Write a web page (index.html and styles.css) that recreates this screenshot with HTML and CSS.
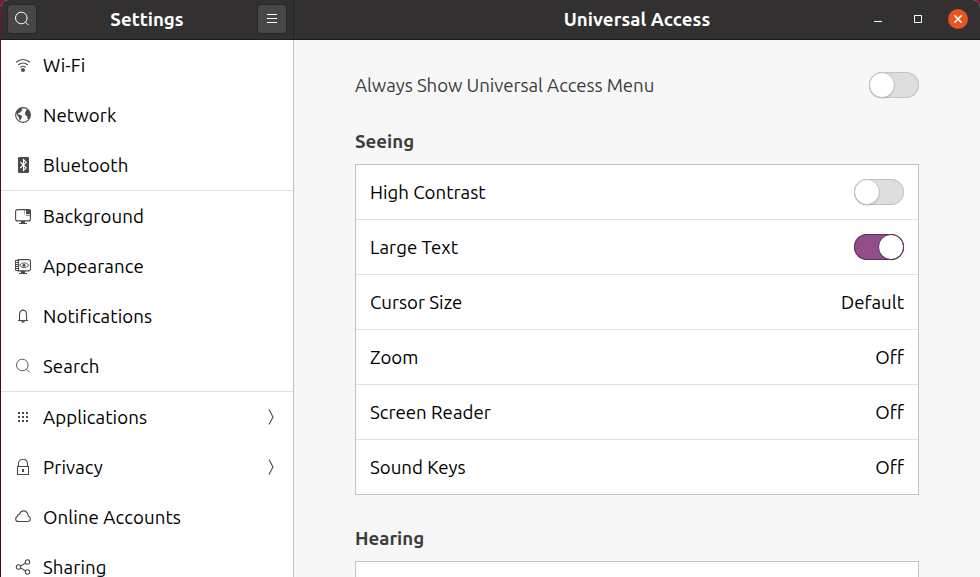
FILE: index.html
```html
<!DOCTYPE html>
<html lang="en">
<head>
    <meta charset="UTF-8">
    <meta name="viewport" content="width=device-width, initial-scale=1.0">
    <title>Settings - Universal Access</title>
    <link rel="stylesheet" href="styles.css">
</head>
<body>
    <div class="window">
        <header class="titlebar">
            <div class="titlebar-left">
                <button class="header-button" aria-label="Search">
                    <svg width="16" height="16" viewBox="0 0 16 16"><circle cx="7.3" cy="7" r="5.8"/><path d="M11.5 11.2l3 3"/></svg>
                </button>
                <h1>Settings</h1>
                <button class="header-button" aria-label="Menu">
                    <svg width="16" height="16" viewBox="0 0 16 16"><path d="M3 3.5h10M3 7.5h10M3 11.5h10"/></svg>
                </button>
            </div>
            <div class="titlebar-right">
                <h1>Universal Access</h1>
                <div class="window-controls">
                    <button class="control" aria-label="Minimize">
                        <svg width="16" height="16" viewBox="0 0 16 16"><path d="M4 10.5h8"/></svg>
                    </button>
                    <button class="control" aria-label="Maximize">
                        <svg width="16" height="16" viewBox="0 0 16 16"><path d="M4.5 4.5h7v7h-7z"/></svg>
                    </button>
                    <button class="control close" aria-label="Close">
                        <svg width="20" height="20" viewBox="0 0 20 20"><path d="M6.3 6.3l7.4 7.4M13.7 6.3l-7.4 7.4"/></svg>
                    </button>
                </div>
            </div>
        </header>

        <div class="content">
            <nav class="sidebar">
                <div class="nav-group">
                    <a class="nav-item">
                        <svg class="icon" viewBox="0 0 16 16"><path d="M1 5.3Q8 -.2 15 5.3M3.2 8Q8 4 12.8 8M5.2 10.4Q8 8.2 10.8 10.4"/><circle class="fill" cx="8" cy="13" r="2"/></svg>
                        <span>Wi-Fi</span>
                    </a>
                    <a class="nav-item">
                        <svg class="icon" viewBox="0 0 16 16"><circle cx="8" cy="8" r="7.4"/><path class="fill" d="M2 3.5L5 1.2 7.6 1 6.6 2.6 7.2 3.6 5.6 4.8 4.3 6 3 6 3.2 7.4 5 7.8 7.2 9.2 6.4 11 5.4 13.6 4.6 13 4 10.5 2.6 8.8 1.4 6.8zM11 3.6L12.3 2.2 14.2 4 15.3 7 15 10 13.4 12.5 12.4 11.5 12.2 9 10.4 8.4 10 6.2z"/></svg>
                        <span>Network</span>
                    </a>
                    <a class="nav-item">
                        <svg class="icon" viewBox="0 0 16 16"><rect class="fill" x="3" y="0" width="11" height="16" rx="1.3"/><path class="light" d="M5.3 5l5.8 5.8-2.6 2.7V2.5l2.6 2.7L5.3 11"/></svg>
                        <span>Bluetooth</span>
                    </a>
                </div>
                <div class="nav-group">
                    <a class="nav-item">
                        <svg class="icon" viewBox="0 -1 16 16"><path d="M10 .6H2.6a2 2 0 0 0-2 2v7.3a2 2 0 0 0 2 2h10.8a2 2 0 0 0 2-2V7"/><path class="fill" d="M9.5 0h4.7A1.8 1.8 0 0 1 16 1.8V8l-2-1.2h-3.2L9.5 5.2zM6 12h4v2h2v1H4v-1h2z"/><path class="light" d="M10.5 1.2V5.8h4.5"/></svg>
                        <span>Background</span>
                    </a>
                    <a class="nav-item">
                        <svg class="icon" viewBox="0 -1 16 16"><path d="M2.5 .6h11a2 2 0 0 1 2 2v7.3a2 2 0 0 1-2 2h-11M3.5 .5v11.5M.5 1v10.5M.5 1.5h3M.5 3.5h3M.5 5.5h3M.5 7.5h3M.5 9.5h3M.5 11.5h3"/><path class="thin" d="M4.5 6.3Q9 1.3 14 6.3 9 10.9 4.5 6.3z"/><circle class="fill" cx="9" cy="6.2" r="1.5"/><path class="fill" d="M6 12h4v2h2v1H4v-1h2z"/></svg>
                        <span>Appearance</span>
                    </a>
                    <a class="nav-item">
                        <svg class="icon" viewBox="0 0 16 16"><path d="M3 12.5h10M4.5 12.2V6.5C4.5 4 6 2.3 8 2.3s3.5 1.7 3.5 4.2v5.7M8 2.3V1"/><path class="fill" d="M6 13.2h4q-.5 1.6-2 1.6t-2-1.6z"/></svg>
                        <span>Notifications</span>
                    </a>
                    <a class="nav-item">
                        <svg class="icon thin" viewBox="0 0 16 16"><circle cx="7.3" cy="7" r="5.8"/><path d="M11.5 11.2l3 3"/></svg>
                        <span>Search</span>
                    </a>
                </div>
                <div class="nav-group">
                    <a class="nav-item">
                        <svg class="icon" viewBox="0 0 16 16"><path class="fill" d="M3 3h2v2H3zM7 3h2v2H7zM11 3h2v2h-2zM3 7h2v2H3zM7 7h2v2H7zM11 7h2v2h-2zM3 11h2v2H3zM7 11h2v2H7zM11 11h2v2h-2z"/></svg>
                        <span>Applications</span>
                        <svg class="arrow" viewBox="0 0 16 16"><path d="M6 .5l4 7.5-4 7.5"/></svg>
                    </a>
                    <a class="nav-item">
                        <svg class="icon" viewBox="0 0 16 16"><path d="M2.5 7.5h11v8h-11zM3.5 7.5V4.5a4.5 4.3 0 0 1 9 0v3"/><path class="fill" d="M7 10h2v3H7z"/></svg>
                        <span>Privacy</span>
                        <svg class="arrow" viewBox="0 0 16 16"><path d="M6 .5l4 7.5-4 7.5"/></svg>
                    </a>
                    <a class="nav-item">
                        <svg class="icon" viewBox="0 0 16 16"><path d="M3.5 12.5h9.2a2.8 2.8 0 0 0 .5-5.5C12.8 4 11 1.9 8.6 1.9 6.6 1.9 5 3.3 4.5 5.3 2.5 5.3 2.4 6.8 2.5 7.2-.2 8.5.1 12.5 3.5 12.5z"/></svg>
                        <span>Online Accounts</span>
                    </a>
                    <a class="nav-item">
                        <svg class="icon" viewBox="0 0 16 16"><circle cx="3.5" cy="8" r="2.2"/><circle cx="12.5" cy="3" r="2.2"/><circle cx="12.5" cy="13" r="2.2"/><path d="M5.6 7l4.8-2.8M5.6 9l4.8 2.8"/></svg>
                        <span>Sharing</span>
                    </a>
                </div>
            </nav>

            <main class="panel">
                <div class="menu-row">
                    <span class="label">Always Show Universal Access Menu</span>
                    <span class="switch"></span>
                </div>

                <h2>Seeing</h2>
                <div class="list">
                    <div class="row"><span class="label">High Contrast</span><span class="switch"></span></div>
                    <div class="row"><span class="label">Large Text</span><span class="switch on"></span></div>
                    <div class="row"><span class="label">Cursor Size</span><span class="label">Default</span></div>
                    <div class="row"><span class="label">Zoom</span><span class="label">Off</span></div>
                    <div class="row"><span class="label">Screen Reader</span><span class="label">Off</span></div>
                    <div class="row"><span class="label">Sound Keys</span><span class="label">Off</span></div>
                </div>

                <h2>Hearing</h2>
                <div class="list">
                    <div class="row"></div>
                </div>
            </main>
        </div>
    </div>
</body>
</html>
```
FILE: styles.css
```css
*,
*::before {
    box-sizing: border-box;
}
body {
    margin: 0;
    background: linear-gradient(#7c1638, #4e1033 60px, #350b30);
    font-family: Ubuntu, "Noto Sans", sans-serif;
    font-size: 18.667px;
    line-height: 24px;
    color: #000;
    overflow: hidden;
}
.window {
    display: flex;
    flex-direction: column;
    height: 577px;
    margin-left: 1px;
    border-radius: 7px 7px 0 0;
    overflow: hidden;
    background-color: #f7f7f7;
}

/* Title bar */
.titlebar {
    display: flex;
    flex: none;
    height: 40px;
    background-color: #323030;
    border-bottom: 1px solid #1d1c1c;
    color: #fff;
}
.titlebar h1 {
    flex: 1;
    margin: 0;
    padding-top: 2px;
    font-size: 18.667px;
    font-weight: bold;
    text-align: center;
}
.titlebar-left {
    display: flex;
    align-items: center;
    width: 293px;
    padding: 0 7px 1px;
    border-right: 1px solid #232222;
}
.titlebar-right {
    display: flex;
    align-items: center;
    flex: 1;
    padding: 0 12px 1px 112px;
}
.titlebar-right h1 {
    letter-spacing: 0.1px;
}
button {
    display: flex;
    align-items: center;
    justify-content: center;
    padding: 0;
    border: none;
    background: none;
}
.header-button {
    width: 28px;
    height: 28px;
    border-radius: 3px;
    background-color: #484745;
    box-shadow: 0 0 0 1px #292828;
}
button svg {
    fill: none;
    stroke: #fff;
    stroke-width: 1;
}
.window-controls {
    display: flex;
    align-items: center;
    gap: 20px;
}
.control {
    width: 20px;
    height: 20px;
}
.control.close {
    border-radius: 50%;
    background-color: #e95420;
}
.close svg {
    stroke-width: 1.6;
}

/* Sidebar */
.content {
    display: flex;
    flex: 1;
    min-height: 0;
}
.sidebar {
    width: 293px;
    flex: none;
    background-color: #fff;
    border-right: 1px solid #c3c3c3;
    overflow: hidden;
}
.nav-group + .nav-group {
    border-top: 1px solid #e1e1e1;
}
.nav-item {
    display: flex;
    align-items: center;
    height: 50px;
    padding: 0 14px;
}
.nav-item span {
    padding-top: 2px;
    letter-spacing: 0.08px;
}
.icon {
    width: 16px;
    height: 16px;
    margin-right: 12px;
    fill: none;
    stroke: #4a4a4a;
    stroke-width: 1.1;
}
.fill {
    fill: #4a4a4a;
    stroke: none;
}
.light {
    fill: none;
    stroke: #fff;
}
.thin {
    stroke-width: 0.9;
}
.arrow {
    width: 16px;
    height: 16px;
    margin-left: auto;
    fill: none;
    stroke: #4a4a4a;
    stroke-width: 1.1;
}

/* Settings panel */
.panel {
    flex: 1;
    padding: 20px 61px 0;
    color: #3d3d3d;
}
.label {
    padding-top: 2px;
}
.menu-row {
    display: flex;
    align-items: center;
    justify-content: space-between;
    height: 50px;
    letter-spacing: -0.07px;
}
.panel h2 {
    margin: 20px 0 10px;
    font-size: 18.667px;
    font-weight: bold;
    line-height: 24px;
}
.list {
    border: 1px solid #c3c3c3;
    background-color: #fff;
    color: #000;
}
.list + h2 {
    margin-top: 32px;
}
.row {
    display: flex;
    align-items: center;
    justify-content: space-between;
    height: 54px;
    padding: 0 14px;
}
.row + .row {
    height: 55px;
    border-top: 1px solid #e1e1e1;
}
.switch {
    display: flex;
    width: 50px;
    height: 26px;
    border-radius: 13px;
    background-color: #dedede;
    box-shadow: inset 0 0 0 1px #c3c3c3;
}
.switch::before {
    content: "";
    width: 26px;
    height: 26px;
    border: 1px solid #c0c0c0;
    border-radius: 50%;
    background-color: #fff;
    box-shadow: 0 1px 0 rgba(0, 0, 0, 0.1);
}
.switch.on {
    justify-content: flex-end;
    background-color: #924d8b;
    box-shadow: inset 0 0 0 1px #5e3159;
}
.switch.on::before {
    border-color: #5e3159;
}
```
